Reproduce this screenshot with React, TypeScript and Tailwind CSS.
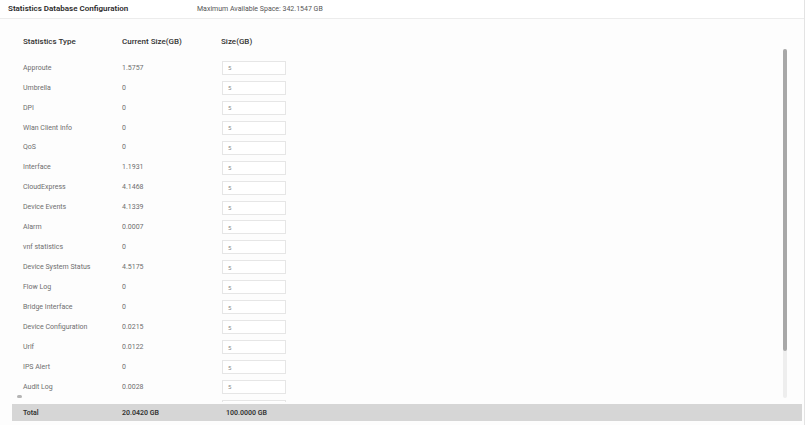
const rows: [string, string][] = [
  ["Approute", "1.5757"],
  ["Umbrella", "0"],
  ["DPI", "0"],
  ["Wlan Client Info", "0"],
  ["QoS", "0"],
  ["Interface", "1.1931"],
  ["CloudExpress", "4.1468"],
  ["Device Events", "4.1339"],
  ["Alarm", "0.0007"],
  ["vnf statistics", "0"],
  ["Device System Status", "4.5175"],
  ["Flow Log", "0"],
  ["Bridge Interface", "0"],
  ["Device Configuration", "0.0215"],
  ["Urlf", "0.0122"],
  ["IPS Alert", "0"],
  ["Audit Log", "0.0028"],
];

export default function App() {
  return (
    <div
      className="relative flex h-[425px] w-[805px] flex-col border-r border-[#e3e3e3] bg-[#fdfdfd]"
      style={{ fontFamily: "Roboto, 'Liberation Sans', sans-serif" }}
    >
      {/* header */}
      <div className="flex h-[19px] shrink-0 items-center border-b border-[#ececec] bg-white pl-[8px]">
        <span className="w-[189px] text-[8px] font-semibold text-[#2b2b2b]">
          Statistics Database Configuration
        </span>
        <span className="text-[7px] text-[#555]">Maximum Available Space: 342.1547 GB</span>
      </div>

      {/* table body */}
      <div className="flex h-[383px] shrink-0 overflow-hidden">
        <div className="flex-1 pl-[23px] pt-[13px]">
          <div className="flex h-[20px] items-center text-[8px] font-medium text-[#333]">
            <span className="w-[99px]">Statistics Type</span>
            <span className="w-[99px]">Current Size(GB)</span>
            <span>Size(GB)</span>
          </div>
          <div className="mt-[6px] flex flex-col">
            {rows.map(([name, size]) => (
              <div key={name} className="flex h-[19.94px] shrink-0 items-center text-[7px] text-[#6e6e6e]">
                <span className="w-[99px]">{name}</span>
                <span className="w-[100px]">{size}</span>
                <div className="flex h-[14px] w-[64px] items-center border border-[#e6e6e6] bg-white pl-[5px] text-[6px] text-[#888]">
                  5
                </div>
              </div>
            ))}
            {/* next row, only the top edge of its input shows */}
            <div className="ml-[199px] mt-[3px] h-[14px] w-[64px] shrink-0 border border-[#e6e6e6] bg-white" />
          </div>
        </div>
        {/* scrollbar */}
        <div className="mr-[17px] mt-[30px] flex h-[349px] w-[4px] flex-col rounded-full bg-[#eeeeee]">
          <div className="h-[302px] w-full rounded-full bg-[#a8a8a8]" />
        </div>
      </div>

      <div className="absolute left-[17px] top-[395px] h-[3px] w-[5px] rounded-full bg-[#b5b5b5]" />

      {/* footer */}
      <div className="ml-[12px] mt-[2px] flex h-[17px] w-[790px] shrink-0 items-center bg-[#d6d6d6] pl-[11px] text-[7px] font-semibold leading-[10px] text-[#333]">
        <span className="w-[99px]">Total</span>
        <span className="w-[104px]">20.0420 GB</span>
        <span>100.0000 GB</span>
      </div>
    </div>
  );
}
